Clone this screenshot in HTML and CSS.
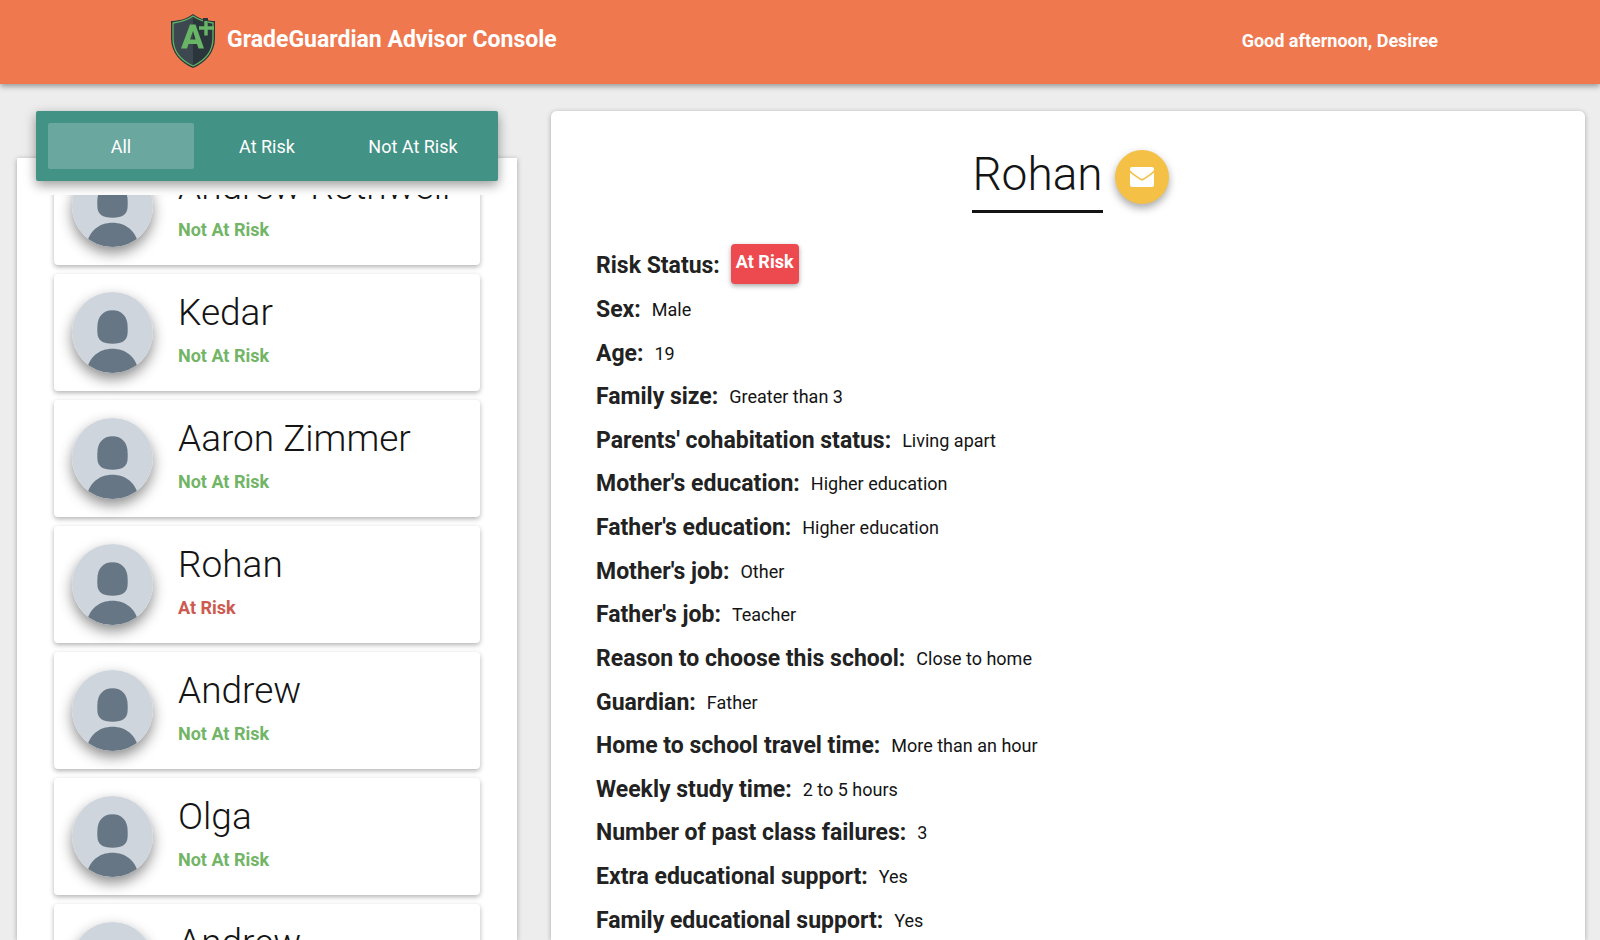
FILE: index.html
```
<!DOCTYPE html>
<html lang="en">
<head>
  <meta charset="UTF-8" />
  <meta name="viewport" content="width=device-width, initial-scale=1.0" />
  <title>GradeGuardian Advisor Console</title>
  <link rel="stylesheet" href="styles.css">
</head>
<body>
  <!-- shared avatar -->
  <svg class="sprite" aria-hidden="true">
    <symbol id="avatar" viewBox="0 0 80 80">
      <rect width="80" height="80" fill="#ced5dc" />
      <path d="M25 35C25 24 31 18 40 18S55 24 55 35V39C55 48 50 51 40 51S25 48 25 39Z" fill="#677685" />
      <path d="M14 80C16 64 27 56 40 56S64 64 66 80Z" fill="#677685" />
    </symbol>
  </svg>

  <header class="navbar">
    <div class="navbar-inner">
      <div class="brand">
        <svg class="logo" viewBox="0 0 44 54" aria-hidden="true">
          <path d="M22 0C29 5 36 7 44 7V24C44 39 34 49 22 54C10 49 0 39 0 24V7C8 7 15 5 22 0Z" fill="#2b353c" />
          <path d="M22 2C15 7 9 8 2 9V24C2 38 11 47 22 52Z" fill="#3c4750" />
          <path d="M22 2C29 7 35 8 42 9V24C42 38 33 47 22 52C11 47 2 38 2 24V9C9 8 15 7 22 2Z" fill="none" stroke="#5fb464" stroke-width="1.3" />
          <path d="M34.500 4V22M27 13.500H41" fill="none" stroke="#2b353c" stroke-width="5" />
          <path d="M10 34.500L19 10.500H24.500L33 34.500H27.500L26 30H17.500L16 34.500ZM19 25.500H24.500L22 17Z" fill="#68b566" fill-rule="evenodd" />
          <path d="M35 7V21.500M28 14H43" fill="none" stroke="#68b566" stroke-width="3.4" />
        </svg>
        <h1 class="title">GradeGuardian Advisor Console</h1>
      </div>
      <p class="greeting">Good afternoon, Desiree</p>
    </div>
  </header>

  <main class="layout">
    <section class="sidebar">
      <nav class="tabs">
        <button class="tab active">All</button>
        <button class="tab">At Risk</button>
        <button class="tab">Not At Risk</button>
      </nav>
      <div class="student-panel">
        <div class="student-list" id="studentList">
          <article class="student">
            <svg class="avatar"><use href="#avatar" /></svg>
            <div>
              <h2 class="name">Andrew Rothwell</h2>
              <p class="status">Not At Risk</p>
            </div>
          </article>
          <article class="student">
            <svg class="avatar"><use href="#avatar" /></svg>
            <div>
              <h2 class="name">Kedar</h2>
              <p class="status">Not At Risk</p>
            </div>
          </article>
          <article class="student">
            <svg class="avatar"><use href="#avatar" /></svg>
            <div>
              <h2 class="name">Aaron Zimmer</h2>
              <p class="status">Not At Risk</p>
            </div>
          </article>
          <article class="student">
            <svg class="avatar"><use href="#avatar" /></svg>
            <div>
              <h2 class="name">Rohan</h2>
              <p class="status risk">At Risk</p>
            </div>
          </article>
          <article class="student">
            <svg class="avatar"><use href="#avatar" /></svg>
            <div>
              <h2 class="name">Andrew</h2>
              <p class="status">Not At Risk</p>
            </div>
          </article>
          <article class="student">
            <svg class="avatar"><use href="#avatar" /></svg>
            <div>
              <h2 class="name">Olga</h2>
              <p class="status">Not At Risk</p>
            </div>
          </article>
          <article class="student">
            <svg class="avatar"><use href="#avatar" /></svg>
            <div>
              <h2 class="name">Andrew</h2>
              <p class="status">Not At Risk</p>
            </div>
          </article>
        </div>
      </div>
    </section>

    <section class="detail">
      <div class="detail-header">
        <h2 class="detail-name">Rohan</h2>
        <button class="mail-btn" aria-label="Send email">
          <svg viewBox="0 0 24 20" width="24" height="20" aria-hidden="true">
            <path d="M2 0H22Q24 0 24 2V3Q23 5 14 11Q12 12.500 10 11Q1 5 0 3V2Q0 0 2 0Z" fill="#fff" />
            <path d="M0 5.500Q2 7.500 9.500 12.500Q12 14.500 14.500 12.500Q22 7.500 24 5.500V18Q24 20 22 20H2Q0 20 0 18Z" fill="#fff" />
          </svg>
        </button>
      </div>

      <dl class="facts">
        <div class="fact"><dt>Risk Status:</dt><dd class="badge">At Risk</dd></div>
        <div class="fact"><dt>Sex:</dt><dd>Male</dd></div>
        <div class="fact"><dt>Age:</dt><dd>19</dd></div>
        <div class="fact"><dt>Family size:</dt><dd>Greater than 3</dd></div>
        <div class="fact"><dt>Parents' cohabitation status:</dt><dd>Living apart</dd></div>
        <div class="fact"><dt>Mother's education:</dt><dd>Higher education</dd></div>
        <div class="fact"><dt>Father's education:</dt><dd>Higher education</dd></div>
        <div class="fact"><dt>Mother's job:</dt><dd>Other</dd></div>
        <div class="fact"><dt>Father's job:</dt><dd>Teacher</dd></div>
        <div class="fact"><dt>Reason to choose this school:</dt><dd>Close to home</dd></div>
        <div class="fact"><dt>Guardian:</dt><dd>Father</dd></div>
        <div class="fact"><dt>Home to school travel time:</dt><dd>More than an hour</dd></div>
        <div class="fact"><dt>Weekly study time:</dt><dd>2 to 5 hours</dd></div>
        <div class="fact"><dt>Number of past class failures:</dt><dd>3</dd></div>
        <div class="fact"><dt>Extra educational support:</dt><dd>Yes</dd></div>
        <div class="fact"><dt>Family educational support:</dt><dd>Yes</dd></div>
      </dl>
    </section>
  </main>

  <script>
    document.getElementById('studentList').scrollTop = 47;
  </script>
</body>
</html>
```
FILE: styles.css
```
* {
  box-sizing: border-box;
  margin: 0;
  padding: 0;
}

body {
  font-family: Roboto, 'Helvetica Neue', Arial, sans-serif;
  font-size: 18px;
  background-color: #ededed;
  color: #141414;
  height: 100vh;
  overflow: hidden;
  display: flex;
  flex-direction: column;
}

.sprite {
  display: none;
}

/* Top bar */
.navbar {
  flex: none;
  height: 84px;
  background-color: #ef784f;
  color: #fff;
  box-shadow: 0 2px 6px rgba(0, 0, 0, 0.4);
}

.navbar-inner {
  height: 100%;
  padding: 0 10% 2px;
  display: flex;
  justify-content: space-between;
  align-items: center;
}

.brand {
  display: flex;
  align-items: center;
  gap: 12px;
  padding-left: 11px;
}

.logo {
  width: 44px;
  height: 54px;
}

.title {
  font-size: 23px;
  line-height: 28px;
  padding-bottom: 2px;
}

.greeting {
  font-weight: 700;
  padding: 0 2px 2px 0;
}

/* Page columns */
.layout {
  flex: 1;
  min-height: 0;
  padding: 27px 15px 0 17px;
  display: flex;
  gap: 34px;
}

.sidebar {
  width: 500px;
  flex: none;
  display: flex;
  flex-direction: column;
}

.tabs {
  position: relative;
  z-index: 1;
  height: 70px;
  margin: 0 19px -23px;
  padding: 12px;
  display: flex;
  background-color: #429285;
  border-radius: 2px;
  box-shadow: 0 4px 12px rgba(0, 0, 0, 0.4);
}

.tab {
  flex: 1;
  border: none;
  border-radius: 2px;
  background: none;
  color: #fff;
  font-family: inherit;
  font-size: 18px;
  cursor: pointer;
}

.tab.active {
  background-color: #69a79f;
}

.student-panel {
  flex: 1;
  min-height: 0;
  padding: 37px 31px 0;
  display: flex;
  background-color: #fff;
  box-shadow: 0 1px 5px rgba(0, 0, 0, 0.3);
}

.student-list {
  flex: 1;
  padding: 0 6px;
  display: flex;
  flex-direction: column;
  gap: 9px;
  overflow-y: auto;
  scrollbar-width: none;
}

.student {
  flex: none;
  height: 117px;
  padding: 0 18px;
  display: flex;
  align-items: center;
  gap: 25px;
  border-radius: 4px;
  box-shadow: 0 2px 5px rgba(0, 0, 0, 0.3);
}

.avatar {
  width: 81px;
  height: 81px;
  border-radius: 50%;
  box-shadow: 0 6px 14px rgba(0, 0, 0, 0.45);
}

.name {
  font-size: 37px;
  font-weight: 300;
  line-height: 46px;
}

.status {
  color: #72b566;
  font-weight: 700;
  line-height: 40px;
}

.status.risk {
  color: #cd5a50;
}

/* Student details */
.detail {
  flex: 1;
  min-width: 0;
  padding: 34px 45px 0;
  background-color: #fff;
  border-radius: 6px 6px 0 0;
  box-shadow: 0 1px 5px rgba(0, 0, 0, 0.3);
  overflow-y: auto;
  scrollbar-width: none;
}

.detail-header {
  padding-left: 5px;
  display: flex;
  justify-content: center;
  align-items: center;
  gap: 12px;
}

.detail-name {
  font-size: 46px;
  font-weight: 300;
  line-height: 58px;
  padding-bottom: 7px;
  border-bottom: 3px solid #141414;
}

.mail-btn {
  width: 54px;
  height: 54px;
  margin-bottom: 5px;
  display: flex;
  justify-content: center;
  align-items: center;
  border: none;
  border-radius: 50%;
  background-color: #f5c046;
  box-shadow: 0 4px 8px rgba(0, 0, 0, 0.35);
  cursor: pointer;
}

.facts {
  min-height: 698px;
  margin-top: 31px;
  display: grid;
  grid-auto-rows: 1fr;
}

.fact {
  display: flex;
  align-items: center;
  gap: 11px;
}

.fact dt {
  color: #222;
  font-size: 23px;
  font-weight: 700;
}

.badge {
  align-self: flex-start;
  height: 40px;
  padding: 0 5px;
  line-height: 36px;
  color: #fff;
  font-weight: 700;
  background-color: #ed4a50;
  border-radius: 4px;
  box-shadow: 0 2px 5px rgba(0, 0, 0, 0.35);
}
```
